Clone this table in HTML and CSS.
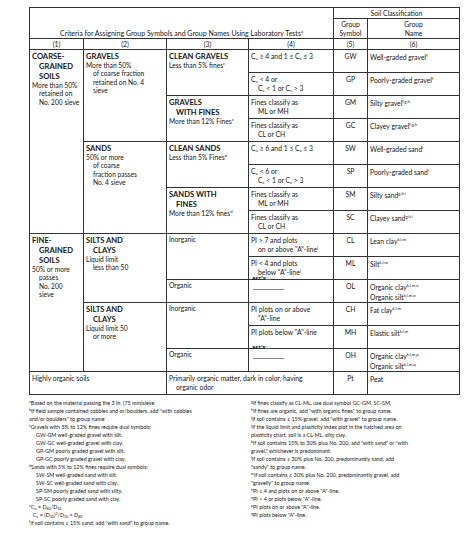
FILE: index.html
```html
<!DOCTYPE html>
<html lang="en">
<head>
<meta charset="utf-8">
<title>Soil Classification</title>
<link rel="stylesheet" href="styles.css">
</head>
<body>
<div class="page">
<table class="uscs">
  <colgroup>
    <col class="c1"><col class="c2"><col class="c3"><col class="c4"><col class="c5"><col class="c6">
  </colgroup>
  <tr class="hA">
    <td colspan="4" rowspan="2" class="hcrit">Criteria for Assigning Group Symbols and Group Names Using Laboratory Tests<sup>a</sup></td>
    <td colspan="2" class="hcen">Soil Classification</td>
  </tr>
  <tr class="hB">
    <td class="hcen">Group<br>Symbol</td>
    <td class="hcen">Group<br>Name</td>
  </tr>
  <tr class="hC">
    <td class="hcen">(1)</td><td class="hcen">(2)</td><td class="hcen">(3)</td><td class="hcen">(4)</td><td class="hcen">(5)</td><td class="hcen">(6)</td>
  </tr>

  <tr class="r">
    <td rowspan="8" class="big">
      <div class="hd hang">COARSE-<br>GRAINED<br>SOILS</div>
      <div class="sm hang">More than 50%<br>retained on<br>No. 200 sieve</div>
    </td>
    <td rowspan="4" class="big">
      <div class="hd">GRAVELS</div>
      <div class="sm hang">More than 50%<br>of coarse fraction<br>retained on No. 4<br>sieve</div>
    </td>
    <td rowspan="2" class="big">
      <div class="hd">CLEAN GRAVELS</div>
      <div class="sm">Less than 5% fines<sup>c</sup></div>
    </td>
    <td class="crit">C<sub>u</sub> ≥ 4 and 1 ≤ C<sub>c</sub> ≤ 3</td>
    <td class="sym">GW</td>
    <td class="name">Well-graded gravel<sup>f</sup></td>
  </tr>
  <tr class="r">
    <td class="crit hang">C<sub>u</sub> &lt; 4 or<br>C<sub>c</sub> &lt; 1 or C<sub>c</sub> &gt; 3</td>
    <td class="sym">GP</td>
    <td class="name">Poorly-graded gravel<sup>f</sup></td>
  </tr>
  <tr class="r">
    <td rowspan="2" class="big">
      <div class="hd hang">GRAVELS<br>WITH FINES</div>
      <div class="sm">More than 12% Fines<sup>c</sup></div>
    </td>
    <td class="crit hang">Fines classify as<br>ML or MH</td>
    <td class="sym">GM</td>
    <td class="name">Silty gravel<sup>f,g,h</sup></td>
  </tr>
  <tr class="r">
    <td class="crit hang">Fines classify as<br>CL or CH</td>
    <td class="sym">GC</td>
    <td class="name">Clayey gravel<sup>f,g,h</sup></td>
  </tr>
  <tr class="r">
    <td rowspan="4" class="big">
      <div class="hd">SANDS</div>
      <div class="sm hang">50% or more<br>of coarse<br>fraction passes<br>No. 4 sieve</div>
    </td>
    <td rowspan="2" class="big">
      <div class="hd">CLEAN SANDS</div>
      <div class="sm">Less than 5% Fines<sup>d</sup></div>
    </td>
    <td class="crit">C<sub>u</sub> ≥ 6 and 1 ≤ C<sub>c</sub> ≤ 3</td>
    <td class="sym">SW</td>
    <td class="name">Well-graded sand<sup>i</sup></td>
  </tr>
  <tr class="r">
    <td class="crit hang">C<sub>u</sub> &lt; 6 or<br>C<sub>c</sub> &lt; 1 or C<sub>c</sub> &gt; 3</td>
    <td class="sym">SP</td>
    <td class="name">Poorly-graded sand<sup>i</sup></td>
  </tr>
  <tr class="r">
    <td rowspan="2" class="big">
      <div class="hd hang">SANDS WITH<br>FINES</div>
      <div class="sm">More than 12% fines<sup>d</sup></div>
    </td>
    <td class="crit hang">Fines classify as<br>ML or MH</td>
    <td class="sym">SM</td>
    <td class="name">Silty sand<sup>g,h,i</sup></td>
  </tr>
  <tr class="r">
    <td class="crit hang">Fines classify as<br>CL or CH</td>
    <td class="sym">SC</td>
    <td class="name">Clayey sand<sup>g,h,i</sup></td>
  </tr>

  <tr class="r">
    <td rowspan="6" class="big">
      <div class="hd hang">FINE-<br>GRAINED<br>SOILS</div>
      <div class="sm hang">50% or more<br>passes<br>No. 200<br>sieve</div>
    </td>
    <td rowspan="3" class="big">
      <div class="hd hang">SILTS AND<br>CLAYS</div>
      <div class="sm hang">Liquid limit<br>less than 50</div>
    </td>
    <td rowspan="2" class="big"><div class="sm">Inorganic</div></td>
    <td class="crit hang">PI &gt; 7 and plots<br>on or above "A"-line<sup>j</sup></td>
    <td class="sym">CL</td>
    <td class="name">Lean clay<sup>k,l,m</sup></td>
  </tr>
  <tr class="r">
    <td class="crit hang">PI &lt; 4 and plots<br>below "A"-line<sup>j</sup></td>
    <td class="sym">ML</td>
    <td class="name">Silt<sup>k,l,m</sup></td>
  </tr>
  <tr class="r">
    <td class="big"><div class="sm">Organic</div></td>
    <td class="crit garbcell"><span class="garble">ᴀᴇᴛʼꜱ<span class="faint">ɪ.ᴊ</span></span><span class="fbar"></span></td>
    <td class="sym">OL</td>
    <td class="name">Organic clay<sup>k,l,m,n</sup><br>Organic silt<sup>k,l,m,o</sup></td>
  </tr>
  <tr class="r">
    <td rowspan="3" class="big">
      <div class="hd hang">SILTS AND<br>CLAYS</div>
      <div class="sm hang">Liquid limit 50<br>or more</div>
    </td>
    <td rowspan="2" class="big"><div class="sm">Inorganic</div></td>
    <td class="crit hang">PI plots on or above<br>"A"-line</td>
    <td class="sym">CH</td>
    <td class="name">Fat clay<sup>k,l,m</sup></td>
  </tr>
  <tr class="r">
    <td class="crit">PI plots below "A"-line</td>
    <td class="sym">MH</td>
    <td class="name">Elastic silt<sup>k,l,m</sup></td>
  </tr>
  <tr class="r">
    <td class="big"><div class="sm">Organic</div></td>
    <td class="crit garbcell"><span class="garble">ᴀᴇᴛ'ꜱ<span class="faint">ɪ.ᴊ</span></span><span class="fbar"></span></td>
    <td class="sym">OH</td>
    <td class="name">Organic clay<sup>k,l,m,p</sup><br>Organic silt<sup>k,l,m,q</sup></td>
  </tr>
  <tr class="r last">
    <td colspan="2" class="crit">Highly organic soils</td>
    <td colspan="2" class="crit hang">Primarily organic matter, dark in color, having<br>organic odor</td>
    <td class="sym">Pt</td>
    <td class="name">Peat</td>
  </tr>
</table>

<div class="notes">
  <div class="ncol left">
    <p><sup>a</sup>Based on the material passing the 3 in. (75 mm)sieve</p>
    <p><sup>b</sup>If field sample contained cobbles and or/boulders, add "with cobbles<br>and/or boulders" to group name</p>
    <p><sup>c</sup>Gravels with 5% to 12% fines require dual symbols:</p>
    <p class="ind">GW-GM well-graded gravel with silt.</p>
    <p class="ind">GW-GC well-graded gravel with clay.</p>
    <p class="ind">GP-GM poorly graded gravel with silt.</p>
    <p class="ind">GP-GC poorly graded gravel with clay.</p>
    <p><sup>d</sup>Sands with 5% to 12% fines require dual symbols:</p>
    <p class="ind">SW-SM well-graded sand with silt.</p>
    <p class="ind">SW-SC well-graded sand with clay.</p>
    <p class="ind">SP-SM poorly graded sand with silty.</p>
    <p class="ind">SP-SC poorly graded sand with clay.</p>
    <p><sup>e</sup>C<sub>u</sub> = D<sub>60</sub>/D<sub>10</sub></p>
    <p class="ind2">C<sub>c</sub> = (D<sub>30</sub>)<sup>2</sup>/D<sub>10</sub> × D<sub>60</sub></p>
    <p><sup>f</sup>If soil contains ≥ 15% sand, add "with sand" to group name.</p>
  </div>
  <div class="ncol right">
    <p><sup>g</sup>If fines classify as CL-ML, use dual symbol GC-GM, SC-SM.</p>
    <p><sup>h</sup>If fines are organic, add "with organic fines" to group name.</p>
    <p><sup>i</sup>If soil contains ≥ 15% gravel, add "with gravel" to group name.</p>
    <p><sup>j</sup>If the liquid limit and plasticity index plot in the hatched area on<br>plasticity chart, soil is a CL-ML, silty clay.</p>
    <p><sup>k</sup>If soil contains 15% to 30% plus No. 200, add "with sand" or "with<br>gravel," whichever is predominant.</p>
    <p><sup>l</sup>If soil contains ≥ 30% plus No. 200, predominantly sand, add<br>"sandy" to group name.</p>
    <p><sup>m</sup>If soil contains ≥ 30% plus No. 200, predominantly gravel, add<br>"gravelly" to group name.</p>
    <p><sup>n</sup>PI ≥ 4 and plots on or above "A"-line.</p>
    <p><sup>o</sup>PI &lt; 4 or plots below "A"-line.</p>
    <p><sup>p</sup>PI plots on or above "A"-line.</p>
    <p><sup>q</sup>PI plots below "A"-line.</p>
  </div>
</div>
</div>
</body>
</html>
```

FILE: styles.css
```css
html, body {
  margin: 0;
  padding: 0;
  background: #ffffff;
}

.page {
  padding: 7px 0 0 29px;
  font-family: Lato, "Liberation Sans", sans-serif;
  color: #161616;
}

.uscs {
  border-collapse: collapse;
  table-layout: fixed;
  width: 431px;
}

.c1 { width: 54px; }
.c2 { width: 83px; }
.c3 { width: 82px; }
.c4 { width: 85px; }
.c5 { width: 34px; }
.c6 { width: 92px; }

.uscs td {
  border: 1px solid #333333;
  padding: 0 2px;
  vertical-align: top;
  font-size: 6.8px;
  line-height: 9px;
  overflow: visible;
}

.uscs sup {
  font-size: 4.2px;
  line-height: 0;
  vertical-align: 3px;
}

.uscs sub {
  font-size: 4.2px;
  line-height: 0;
  vertical-align: -1px;
}

.hA { height: 11px; }
.hB { height: 20px; }
.hC { height: 11px; }
.r { height: 23px; }

.uscs td.hcrit {
  text-align: center;
  vertical-align: bottom;
  padding-bottom: 0;
  font-size: 7px;
  line-height: 10px;
}

.uscs td.hcen {
  text-align: center;
  vertical-align: middle;
  font-size: 6.8px;
  line-height: 9px;
}

.uscs td.big {
  padding-top: 1px;
}

.hd {
  font-weight: bold;
  font-size: 7.6px;
  line-height: 10px;
}

.sm {
  font-size: 6.7px;
  line-height: 8.3px;
}

.hang {
  padding-left: 7px;
  text-indent: -7px;
}

.uscs td.crit {
  padding-top: 2px;
}

.uscs td.hang {
  padding-left: 9px;
  text-indent: -7px;
}

.uscs td.sym {
  text-align: center;
  padding-top: 2px;
}

.uscs td.name {
  padding-top: 2px;
  line-height: 10px;
}

.garbcell {
  position: relative;
}

.garble {
  position: absolute;
  left: 3px;
  top: -5px;
  font-family: "DejaVu Sans", sans-serif;
  font-weight: bold;
  font-size: 5.5px;
  line-height: 7px;
  letter-spacing: -0.3px;
  color: #222;
}

.garble .faint {
  color: #999;
  font-weight: normal;
}

.fbar {
  position: absolute;
  left: 4px;
  top: 9px;
  width: 31px;
  height: 1px;
  background: #8a8a8a;
}

.notes {
  display: flex;
  margin-top: 4px;
}

.ncol p {
  margin: 0;
  font-size: 5.4px;
  line-height: 8px;
  white-space: nowrap;
}

.ncol sup {
  font-size: 3.6px;
  line-height: 0;
  vertical-align: 2.5px;
}

.ncol sub {
  font-size: 3.6px;
  line-height: 0;
  vertical-align: -1px;
}

.left {
  width: 222px;
}

.ind {
  padding-left: 7px;
}

.ind2 {
  padding-left: 4px;
}
```
